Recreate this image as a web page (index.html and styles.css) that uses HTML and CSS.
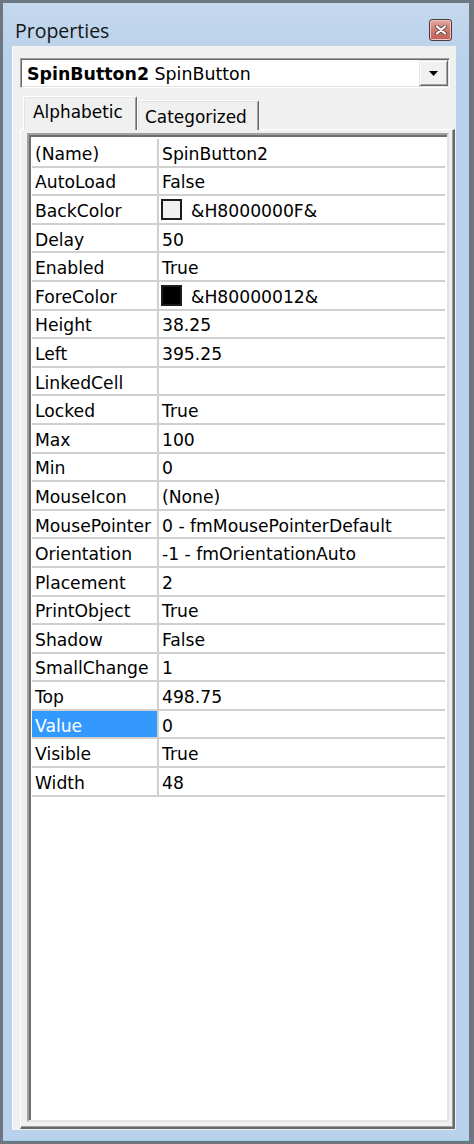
FILE: index.html
```html
<!DOCTYPE html>
<html>
<head>
<meta charset="utf-8">
<link rel="stylesheet" href="styles.css">
</head>
<body>
<div class="window">
  <div class="titlebar">
    <span class="title">Properties</span>
    <span class="close"><svg width="12" height="10" viewBox="0 0 12 10"><path d="M2 1.5 L10 8.5 M10 1.5 L2 8.5" stroke="#6b4a48" stroke-width="4" stroke-linecap="round"/><path d="M2 1.5 L10 8.5 M10 1.5 L2 8.5" stroke="#ffffff" stroke-width="2.2" stroke-linecap="round"/></svg></span>
  </div>
  <div class="panel">
    <div class="combo">
      <span class="combo-text"><b>SpinButton2</b> SpinButton</span>
      <span class="dropbtn"><svg width="9" height="5" viewBox="0 0 9 5"><polygon points="0,0 9,0 4.5,5" fill="#000"/></svg></span>
    </div>
    <div class="tabs">
      <div class="tab active">Alphabetic</div>
      <div class="tab">Categorized</div>
    </div>
    <div class="page">
      <div class="list">
        <div class="row"><div class="name">(Name)</div><div class="val">SpinButton2</div></div>
        <div class="row"><div class="name">AutoLoad</div><div class="val">False</div></div>
        <div class="row"><div class="name">BackColor</div><div class="val"><span class="swatch light"></span>&amp;H8000000F&amp;</div></div>
        <div class="row"><div class="name">Delay</div><div class="val">50</div></div>
        <div class="row"><div class="name">Enabled</div><div class="val">True</div></div>
        <div class="row"><div class="name">ForeColor</div><div class="val"><span class="swatch dark"></span>&amp;H80000012&amp;</div></div>
        <div class="row"><div class="name">Height</div><div class="val">38.25</div></div>
        <div class="row"><div class="name">Left</div><div class="val">395.25</div></div>
        <div class="row"><div class="name">LinkedCell</div><div class="val"></div></div>
        <div class="row"><div class="name">Locked</div><div class="val">True</div></div>
        <div class="row"><div class="name">Max</div><div class="val">100</div></div>
        <div class="row"><div class="name">Min</div><div class="val">0</div></div>
        <div class="row"><div class="name">MouseIcon</div><div class="val">(None)</div></div>
        <div class="row"><div class="name">MousePointer</div><div class="val">0 - fmMousePointerDefault</div></div>
        <div class="row"><div class="name">Orientation</div><div class="val">-1 - fmOrientationAuto</div></div>
        <div class="row"><div class="name">Placement</div><div class="val">2</div></div>
        <div class="row"><div class="name">PrintObject</div><div class="val">True</div></div>
        <div class="row"><div class="name">Shadow</div><div class="val">False</div></div>
        <div class="row"><div class="name">SmallChange</div><div class="val">1</div></div>
        <div class="row"><div class="name">Top</div><div class="val">498.75</div></div>
        <div class="row"><div class="name selected">Value</div><div class="val">0</div></div>
        <div class="row"><div class="name">Visible</div><div class="val">True</div></div>
        <div class="row"><div class="name">Width</div><div class="val">48</div></div>
      </div>
    </div>
  </div>
</div>
</body>
</html>
```
FILE: styles.css
```css
html, body {
  margin: 0;
  padding: 0;
  background: #b9d1ea;
}

.window {
  width: 474px;
  height: 1144px;
  box-sizing: border-box;
  border-style: solid;
  border-color: #6e7781;
  border-width: 3px 5px 3px 3px;
  background: linear-gradient(#c4d8ee, #b9d1ea 60px);
  padding: 0 13px 11px 10px;
  display: flex;
  flex-direction: column;
  box-shadow: inset 0 -1px 0 #8fd3e6;
}

.titlebar {
  height: 43px;
  box-sizing: border-box;
  padding: 11px 4px 0 2px;
  display: flex;
  align-items: center;
  justify-content: space-between;
  flex-shrink: 0;
}

.title {
  font-family: "Open Sans", "Noto Sans", sans-serif;
  font-size: 19.5px;
  color: #151515;
  line-height: 1;
  padding-top: 1px;
}

.close {
  width: 23px;
  height: 22px;
  box-sizing: border-box;
  border: 1px solid #4f3b3d;
  border-radius: 3px;
  background: linear-gradient(#e4aaa2, #d07a70 50%, #c45f55);
  display: flex;
  align-items: center;
  justify-content: center;
  box-shadow: inset 0 0 0 1px #efc6bf;
}

.panel {
  flex: 1;
  background: #f0f0f0;
  display: flex;
  flex-direction: column;
  padding: 12px 0 1px 0;
  border-left: 1px solid #f9fbfd;
  box-sizing: border-box;
  margin-left: -1px;
}

.combo {
  margin-left: 7px;
  width: 430px;
  height: 30px;
  box-sizing: border-box;
  border-style: solid;
  border-width: 1px;
  border-color: #a0a0a0 #ffffff #ffffff #a0a0a0;
  box-shadow: inset 1px 1px 0 #696969, inset -1px -1px 0 #e3e3e3;
  background: #ffffff;
  display: flex;
  align-items: center;
  padding: 1px 1px 1px 6px;
  flex-shrink: 0;
}

.combo-text {
  flex: 1;
  font-family: "DejaVu Sans", sans-serif;
  font-size: 17.4px;
  color: #000;
  white-space: nowrap;
  padding-top: 2px;
}

.combo-text b {
  font-weight: bold;
}

.dropbtn {
  width: 29px;
  height: 26px;
  box-sizing: border-box;
  background: #f0f0f0;
  border-style: solid;
  border-width: 1px;
  border-color: #e3e3e3 #696969 #696969 #e3e3e3;
  box-shadow: inset 1px 1px 0 #ffffff, inset -1px -1px 0 #a0a0a0;
  display: flex;
  align-items: center;
  justify-content: center;
}

.tabs {
  margin-top: 9px;
  margin-left: 10px;
  height: 33px;
  display: flex;
  align-items: flex-end;
  flex-shrink: 0;
  position: relative;
  z-index: 1;
  margin-bottom: -1px;
}

.tab {
  font-family: "DejaVu Sans", sans-serif;
  font-size: 16.9px;
  color: #000;
  background: #f0f0f0;
  box-sizing: border-box;
  border-style: solid;
  border-width: 1px 1px 0 1px;
  border-color: #ffffff #696969 #f0f0f0 #ffffff;
  box-shadow: inset 1px 1px 0 #e3e3e3, inset -1px 0 0 #a0a0a0;
  border-radius: 2px 2px 0 0;
  height: 30px;
  display: flex;
  align-items: center;
  padding: 0 10px 0 7px;
}

.tab.active {
  width: 114px;
  height: 34px;
  padding: 0 0 0 9px;
  align-items: flex-start;
  padding-top: 5px;
}

.tab:not(.active) {
  width: 122px;
  padding-top: 3px;
}

.page {
  flex: 1;
  margin-left: 7px;
  width: 435px;
  box-sizing: border-box;
  border-style: solid;
  border-width: 1px 2px 2px 1px;
  border-color: #ffffff #696969 #696969 #ffffff;
  box-shadow: inset -1px -1px 0 #a0a0a0;
  padding: 3px 4px 5px 6px;
  display: flex;
  flex-direction: column;
}

.list {
  flex: 1;
  background: #ffffff;
  box-sizing: border-box;
  border-style: solid;
  border-width: 2px;
  border-color: #a0a0a0 #e3e3e3 #e3e3e3 #a0a0a0;
  box-shadow: inset 2px 2px 0 #6e6e6e;
  padding: 4px 2px 0 3px;
}

.row {
  display: grid;
  grid-template-columns: 127px 1fr;
  height: 28.6px;
  box-sizing: border-box;
  border-bottom: 2px solid #d0d0d0;
  font-family: "DejaVu Sans", sans-serif;
  font-size: 17.2px;
  color: #000;
}

.name {
  border-right: 2px solid #d0d0d0;
  padding-left: 3px;
  padding-top: 3px;
  display: flex;
  align-items: center;
  white-space: nowrap;
  overflow: hidden;
}

.name.selected {
  background: #3399ff;
  color: #ffffff;
}

.val {
  padding-left: 3px;
  padding-top: 3px;
  display: flex;
  align-items: center;
  white-space: nowrap;
}

.swatch {
  width: 21px;
  height: 21px;
  box-sizing: border-box;
  border: 2px solid #1c1c1c;
  margin-right: 9px;
  margin-left: -1px;
  margin-top: -2px;
}

.swatch.light {
  background: #f0f0f0;
}

.swatch.dark {
  background: #000000;
}
```
